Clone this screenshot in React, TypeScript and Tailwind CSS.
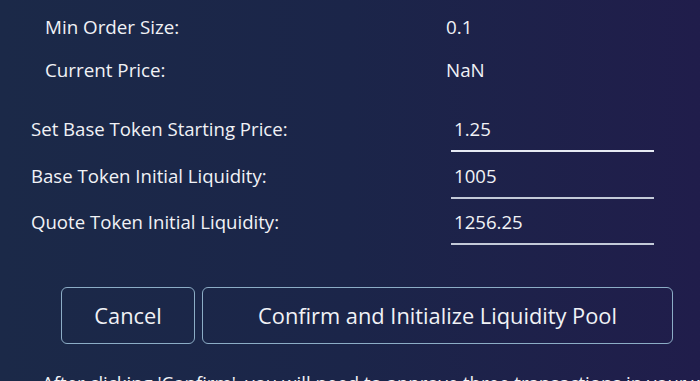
export default function App() {
  const info = [
    { label: 'Min Order Size:', value: '0.1' },
    { label: 'Current Price:', value: 'NaN' },
  ];
  const fields = [
    { label: 'Set Base Token Starting Price:', value: '1.25', h: 'h-[47px]', line: 'border-[#e6eaf3]' },
    { label: 'Base Token Initial Liquidity:', value: '1005', h: 'h-[47px]', line: 'border-[#c3cad8]' },
    { label: 'Quote Token Initial Liquidity:', value: '1256.25', h: 'h-[46px]', line: 'border-[#c3cad8]' },
  ];

  return (
    <div
      className="w-[700px] h-[381px] overflow-hidden bg-gradient-to-r from-[#1b2948] via-[#1b2549] to-[#201d4b] text-[#f1f2f6]"
      style={{ fontFamily: '"Open Sans", "Noto Sans", sans-serif' }}
    >
      {/* Pool info */}
      <div className="pt-[6px] pl-[45px]">
        {info.map((row) => (
          <div key={row.label} className="flex h-[43px] items-center text-[18.8px]">
            <span className="w-[401px]">{row.label}</span>
            <span>{row.value}</span>
          </div>
        ))}
      </div>

      {/* Inputs */}
      <div className="mt-[13px] pl-[31px]">
        {fields.map((f) => (
          <div key={f.label} className={`flex ${f.h} items-center text-[18.6px]`}>
            <span className="w-[420px]">{f.label}</span>
            <input
              readOnly
              value={f.value}
              className={`h-full w-[203px] border-b-2 ${f.line} bg-transparent pl-[3px] pt-[1px] text-[18.6px] text-[#f1f2f6] outline-none`}
            />
          </div>
        ))}
      </div>

      {/* Actions */}
      <div className="mt-[42px] flex gap-[7px] pl-[61px]">
        <button className="h-[57px] w-[134px] rounded-[6px] border border-[#8cadc6] pt-[2px] text-[21.8px]">
          Cancel
        </button>
        <button className="h-[57px] w-[471px] rounded-[6px] border border-[#8cadc6] pt-[2px] text-[21.8px]">
          Confirm and Initialize Liquidity Pool
        </button>
      </div>

      <p className="mt-[25px] pl-[42px] text-[18.6px] whitespace-nowrap">
        After clicking 'Confirm', you will need to approve three transactions in your wallet.
      </p>
    </div>
  );
}
